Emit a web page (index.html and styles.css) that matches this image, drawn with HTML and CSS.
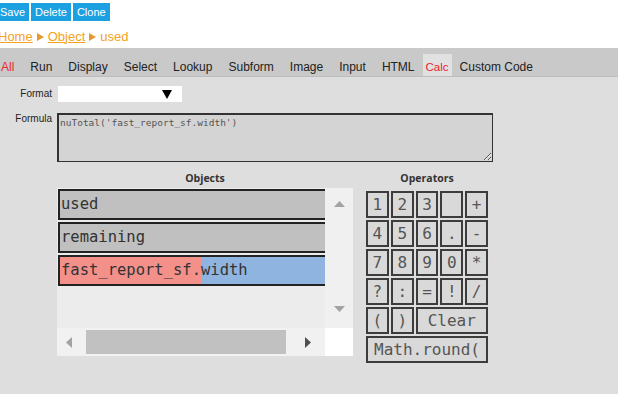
FILE: index.html
```html
<!DOCTYPE html>
<html lang="en">
<head>
    <meta charset="UTF-8">
    <title>used</title>
    <link rel="stylesheet" href="styles.css">
</head>
<body>
    <div class="actions">
        <button class="btn">Save</button>
        <button class="btn">Delete</button>
        <button class="btn">Clone</button>
    </div>

    <div class="crumbs">
        <a href="#">Home</a>
        <svg class="sep" width="7" height="8" viewBox="0 0 7 8"><polygon points="0,0 7,4 0,8" fill="#e49a2e"/></svg>
        <a href="#">Object</a>
        <svg class="sep" width="7" height="8" viewBox="0 0 7 8"><polygon points="0,0 7,4 0,8" fill="#e49a2e"/></svg>
        <span>used</span>
    </div>

    <div class="tabs">
        <span class="tab tab-all">All</span>
        <span class="tab">Run</span>
        <span class="tab">Display</span>
        <span class="tab">Select</span>
        <span class="tab">Lookup</span>
        <span class="tab">Subform</span>
        <span class="tab">Image</span>
        <span class="tab">Input</span>
        <span class="tab">HTML</span>
        <span class="tab tab-active">Calc</span>
        <span class="tab">Custom Code</span>
    </div>

    <div class="panel">
        <div class="field">
            <label class="field-label">Format</label>
            <div class="select">
                <svg width="10" height="9" viewBox="0 0 10 9"><polygon points="0,0 10,0 5,9" fill="#000"/></svg>
            </div>
        </div>

        <div class="field field-top">
            <label class="field-label">Formula</label>
            <textarea class="formula" readonly>nuTotal('fast_report_sf.width')</textarea>
        </div>

        <div class="calc">
            <div class="objects-col">
                <div class="col-title">Objects</div>
                <div class="objects">
                    <div class="object-list">
                        <div class="object">used</div>
                        <div class="object">remaining</div>
                        <div class="object object-split">
                            <span class="part-form">fast_report_sf.</span><span class="part-field">width</span>
                        </div>
                    </div>
                    <div class="vscroll">
                        <svg width="11" height="6" viewBox="0 0 11 6"><polygon points="0,6 11,6 5.5,0" fill="#a3a3a3"/></svg>
                        <svg width="11" height="6" viewBox="0 0 11 6"><polygon points="0,0 11,0 5.5,6" fill="#a3a3a3"/></svg>
                    </div>
                    <div class="hscroll">
                        <svg width="6" height="11" viewBox="0 0 6 11"><polygon points="6,0 6,11 0,5.5" fill="#a3a3a3"/></svg>
                        <div class="hthumb"></div>
                        <svg width="6" height="11" viewBox="0 0 6 11"><polygon points="0,0 0,11 6,5.5" fill="#505050"/></svg>
                    </div>
                    <div class="corner"></div>
                </div>
            </div>

            <div class="ops-col">
                <div class="col-title">Operators</div>
                <div class="ops">
                    <button class="op">1</button>
                    <button class="op">2</button>
                    <button class="op">3</button>
                    <button class="op"></button>
                    <button class="op">+</button>

                    <button class="op">4</button>
                    <button class="op">5</button>
                    <button class="op">6</button>
                    <button class="op">.</button>
                    <button class="op">-</button>

                    <button class="op">7</button>
                    <button class="op">8</button>
                    <button class="op">9</button>
                    <button class="op">0</button>
                    <button class="op">*</button>

                    <button class="op">?</button>
                    <button class="op">:</button>
                    <button class="op">=</button>
                    <button class="op">!</button>
                    <button class="op">/</button>

                    <button class="op">(</button>
                    <button class="op">)</button>
                    <button class="op span3">Clear</button>

                    <button class="op span5">Math.round(</button>
                </div>
            </div>
        </div>
    </div>
</body>
</html>
```

FILE: styles.css
```css
body {
    margin: 0;
    font-family: "Liberation Sans", Arial, sans-serif;
    background-color: #fff;
    overflow: hidden;
}

.actions {
    display: flex;
    gap: 2px;
    margin-left: -4px;
    padding-top: 3px;
}

.btn {
    height: 18px;
    padding: 0 4px;
    border: none;
    background-color: #1ba1e2;
    color: #fff;
    font-family: "Liberation Sans", Arial, sans-serif;
    font-size: 11px;
}

.crumbs {
    display: flex;
    align-items: center;
    gap: 4px;
    height: 24px;
    margin-top: 3px;
    margin-left: -2px;
    font-size: 13px;
    color: #f5a31f;
}

.crumbs a {
    color: #f5a31f;
}

.crumbs .sep {
    margin-top: 1px;
}

.tabs {
    display: flex;
    align-items: flex-end;
    height: 28px;
    border-bottom: 1px solid #bdbdbd;
    background-color: #c9c9c9;
}

.tab {
    height: 20px;
    padding: 2px 8px 0;
    line-height: 22px;
    font-size: 12px;
    color: #222;
}

.tab-all {
    padding-left: 1px;
    color: #f0262a;
}

.tab-active {
    padding: 2px 3px 0;
    background-color: #e1e1e1;
    color: #e8232c;
    font-size: 11.5px;
}

.panel {
    height: 317px;
    padding-top: 9px;
    box-sizing: border-box;
    background-color: #dedede;
}

.field {
    display: flex;
    align-items: center;
}

.field-top {
    align-items: flex-start;
    margin-top: 11px;
}

.field-label {
    width: 52px;
    text-align: right;
    font-size: 10px;
    line-height: 12px;
    color: #222;
}

.select {
    display: flex;
    align-items: center;
    justify-content: flex-end;
    width: 124px;
    height: 16px;
    margin-left: 6px;
    padding-right: 10px;
    box-sizing: border-box;
    background-color: #fff;
}

.formula {
    width: 436px;
    height: 49px;
    margin: 0 0 0 5px;
    padding: 2px 1px;
    box-sizing: border-box;
    border: 1px solid #333;
    border-top-width: 2px;
    border-left-width: 2px;
    background-color: #d4d4d4;
    color: #555;
    font-family: "DejaVu Sans Mono", monospace;
    font-size: 9.5px;
    outline: none;
}

.calc {
    display: flex;
    gap: 13px;
    margin-top: 9px;
    padding-left: 57px;
}

.col-title {
    height: 14px;
    margin-bottom: 3px;
    text-align: center;
    font-family: "Open Sans", sans-serif;
    font-weight: bold;
    font-size: 10.5px;
    line-height: 14px;
    color: #333;
}

.objects-col {
    width: 296px;
}

.objects {
    display: grid;
    grid-template-columns: 268px 28px;
    grid-template-rows: 140px 28px;
}

.object-list {
    padding: 1px 0 0 1px;
    overflow: hidden;
    background-color: #ececec;
}

.object {
    display: flex;
    width: 300px;
    height: 31px;
    margin-bottom: 2px;
    padding-left: 1px;
    box-sizing: border-box;
    border: 2px solid #222;
    border-right: none;
    background-color: #c0c0c0;
    color: #333;
    font-family: "DejaVu Sans Mono", monospace;
    font-size: 15.5px;
    line-height: 26px;
    white-space: nowrap;
}

.object-split {
    padding-left: 0;
}

.part-form {
    padding-left: 1px;
    background-color: #f4908a;
}

.part-field {
    flex: 1;
    background-color: #8fb4df;
}

.vscroll {
    display: flex;
    flex-direction: column;
    align-items: center;
    justify-content: space-between;
    padding: 13px 0 16px 1px;
    background-color: #f0f0f0;
}

.hscroll {
    display: flex;
    align-items: center;
    padding: 0 11px 0 9px;
    background-color: #f1f1f1;
}

.hthumb {
    width: 200px;
    height: 24px;
    margin: 0 19px 0 14px;
    background-color: #c1c1c1;
}

.corner {
    background-color: #fff;
}

.ops-col {
    width: 122px;
}

.ops {
    display: grid;
    grid-template-columns: repeat(5, 1fr);
    grid-auto-rows: 27px;
    gap: 2px;
    margin-top: 6px;
}

.op {
    padding: 0;
    border: 2px solid #3c3c3c;
    background-color: #d9d9d9;
    color: #555;
    font-family: "DejaVu Sans Mono", monospace;
    font-size: 16px;
}

.op.span3 {
    grid-column: span 3;
}

.op.span5 {
    grid-column: span 5;
}
```
